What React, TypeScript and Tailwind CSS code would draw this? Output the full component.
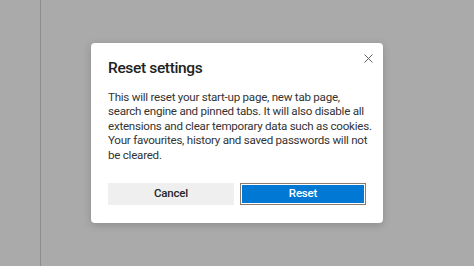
import React from "react";

const lines = [
  "This will reset your start-up page, new tab page,",
  "search engine and pinned tabs. It will also disable all",
  "extensions and clear temporary data such as cookies.",
  "Your favourites, history and saved passwords will not",
  "be cleared.",
];

export default function App() {
  return (
    <div
      className="relative flex h-[266px] w-[474px] overflow-hidden bg-[#aaaaaa]"
      style={{ fontFamily: 'Roboto, "Liberation Sans", Arial, sans-serif' }}
    >
      <div className="h-full w-[41px] border-r border-[#8c8c8c]" />
      <div className="flex-1" />
      <div className="absolute inset-0 flex items-center justify-center">
        <div className="relative h-[180px] w-[292px] rounded-[4px] bg-white pl-[17px] pr-[17px] pt-[15px] shadow-[0_2px_8px_rgba(0,0,0,0.18)]">
          <button className="absolute right-[10px] top-[10px] flex h-[10px] w-[10px] items-center justify-center">
            <svg width="9" height="9" viewBox="0 0 9 9" fill="none" stroke="#5f5f5f" strokeWidth="1">
              <path d="M0.5 0.5 L8.5 8.5 M8.5 0.5 L0.5 8.5" />
            </svg>
          </button>
          <h1 className="text-[15.5px] font-medium leading-[20px] tracking-[-0.35px] text-[#222222]">Reset settings</h1>
          <p className="mt-[12px] text-[11.6px] leading-[14.4px] tracking-[-0.25px] text-[#333333]">
            {lines.map((l) => (
              <span key={l} className="block whitespace-nowrap">
                {l}
              </span>
            ))}
          </p>
          <div className="mt-[21px] grid grid-cols-2 gap-[6px]">
            <button className="h-[22px] bg-[#efefef] text-[11.5px] font-medium tracking-[-0.2px] text-[#262626]">Cancel</button>
            <button className="h-[22px] bg-[#0078d4] text-[11.5px] font-medium tracking-[-0.2px] text-white shadow-[inset_0_0_0_1px_#8a7b6c,inset_0_0_0_2px_#ffffff]">
              Reset
            </button>
          </div>
        </div>
      </div>
    </div>
  );
}
